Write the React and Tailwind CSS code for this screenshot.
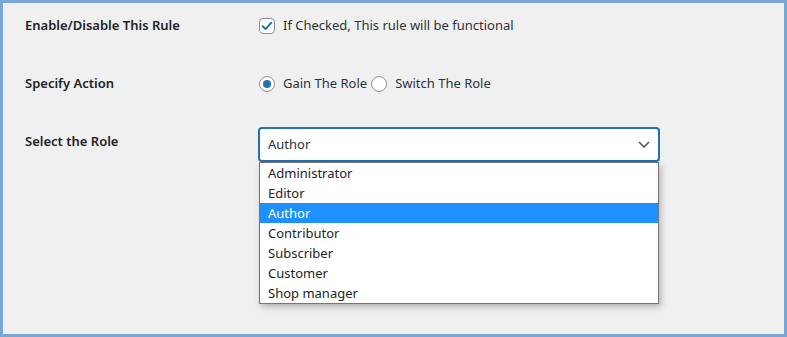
import React from 'react';

const roles = ['Administrator', 'Editor', 'Author', 'Contributor', 'Subscriber', 'Customer', 'Shop manager'];

const Row = ({ label, className, children }) => (
  <div className={`flex ${className}`}>
    <div className="w-[233px] shrink-0 font-semibold text-[#1d2327]">{label}</div>
    <div className="flex-1">{children}</div>
  </div>
);

export default function App() {
  return (
    <div
      className="w-[787px] h-[337px] border-[3px] border-[#79a6d2] bg-[#f0f0f1] text-[13px] text-[#2c3338] overflow-hidden"
      style={{ fontFamily: '"Noto Sans", sans-serif' }}
    >
      <div className="pl-[22px] pt-[14px]">
        {/* Enable / disable */}
        <Row label="Enable/Disable This Rule" className="items-center h-[17px]">
          <label className="flex items-center gap-[8px] ml-px">
            <span className="w-4 h-4 rounded-[4px] border border-[#8c8f94] bg-white flex items-center justify-center">
              <svg viewBox="0 0 16 16" className="w-[14px] h-[14px]">
                <path d="M3 8.2 L6.4 11.4 L13 4.2" fill="none" stroke="#2271b1" strokeWidth="2.2" strokeLinecap="round" strokeLinejoin="round" />
              </svg>
            </span>
            If Checked, This rule will be functional
          </label>
        </Row>

        {/* Action */}
        <Row label="Specify Action" className="items-center h-[17px] mt-[41px]">
          <div className="flex items-center ml-px">
            <span className="w-4 h-4 rounded-full border border-[#8c8f94] bg-white flex items-center justify-center">
              <span className="w-2 h-2 rounded-full bg-[#2271b1]" />
            </span>
            <span className="ml-[8px]">Gain The Role</span>
            <span className="w-4 h-4 ml-[4px] rounded-full border border-[#8c8f94] bg-white" />
            <span className="ml-[8px]">Switch The Role</span>
          </div>
        </Row>

        {/* Role select */}
        <Row label="Select the Role" className="mt-[40px]">
          <div className="relative w-[402px] -mt-[5px]">
            <div className="h-[35px] rounded-[4px] border-2 border-[#2271b1] bg-white flex items-center justify-between pl-[8px] pr-[8px]">
              <span>Author</span>
              <svg viewBox="0 0 12 7" className="w-[12px] h-[7px]">
                <path d="M1 1 L6 6 L11 1" fill="none" stroke="#50575e" strokeWidth="1.6" />
              </svg>
            </div>
            <ul className="absolute left-[1px] right-[1px] top-[35px] bg-white border border-[#767676] shadow-[2px_3px_6px_rgba(0,0,0,0.25)]">
              {roles.map((r) => (
                <li
                  key={r}
                  className={`h-[20px] leading-[20px] pl-[8px] ${r === 'Author' ? 'bg-[#1e90ff] text-white' : 'text-[#1d2327]'}`}
                >
                  {r}
                </li>
              ))}
            </ul>
          </div>
        </Row>
      </div>
    </div>
  );
}
